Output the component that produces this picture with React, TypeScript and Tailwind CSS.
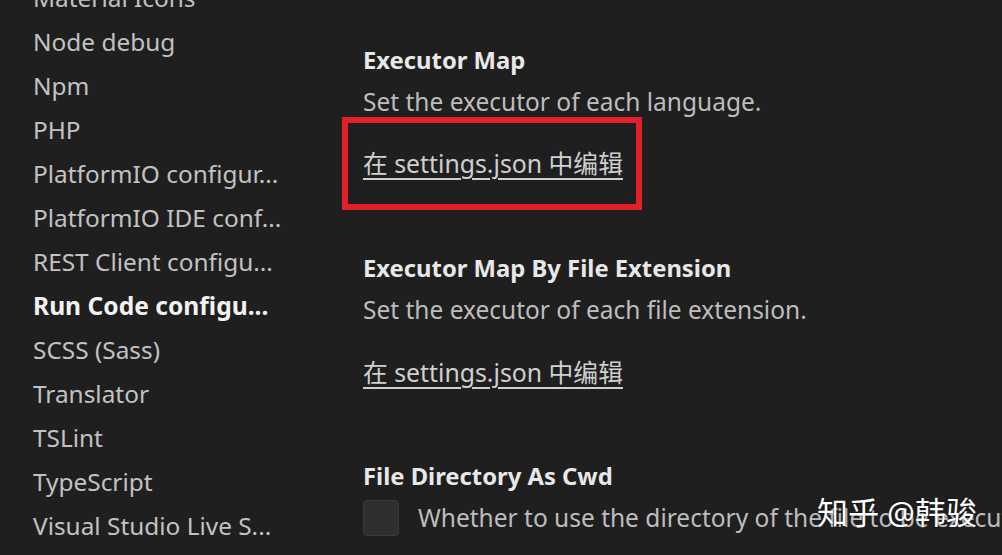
import React from "react";

const items: { label: string; bold?: boolean }[] = [
  { label: "Material Icons" },
  { label: "Node debug" },
  { label: "Npm" },
  { label: "PHP" },
  { label: "PlatformIO configur..." },
  { label: "PlatformIO IDE conf..." },
  { label: "REST Client configu..." },
  { label: "Run Code configu...", bold: true },
  { label: "SCSS (Sass)" },
  { label: "Translator" },
  { label: "TSLint" },
  { label: "TypeScript" },
  { label: "Visual Studio Live S..." },
];

const font = { fontFamily: '"Noto Sans", "Noto Sans CJK SC", sans-serif' };

function EditLink() {
  return (
    <div className="h-[42px] leading-[42px] text-[24.8px] text-[#cfcfcf] underline underline-offset-[5px] decoration-[1.5px] whitespace-nowrap">
      在 settings.json 中编辑
    </div>
  );
}

export default function App() {
  return (
    <div
      className="w-[1002px] h-[555px] bg-[#1f1f1f] overflow-hidden flex relative"
      style={font}
    >
      <div className="w-[330px] shrink-0 pl-[33px] -mt-[24px] flex flex-col">
        {items.map((it) => (
          <div
            key={it.label}
            className={`h-[44px] leading-[44px] whitespace-nowrap ${
              it.bold ? "text-[24.6px] font-bold text-[#f2f2f2]" : "text-[24.4px] text-[#c2c2c2]"
            }`}
          >
            {it.label}
          </div>
        ))}
      </div>
      <div className="flex-1 pl-[33px] pt-[39px] flex flex-col">
        <div className="h-[42px] leading-[42px] text-[23.8px] font-bold text-[#e8e8e8]">
          Executor Map
        </div>
        <div className="h-[42px] leading-[42px] text-[24.5px] text-[#bdbdbd]">
          Set the executor of each language.
        </div>
        <div className="mt-[19px] relative w-fit">
          <EditLink />
          <div className="absolute -left-[21px] -right-[19px] -top-[25px] -bottom-[26px] border-[6px] border-[#e3202a]" />
        </div>
        <div className="mt-[63px] h-[42px] leading-[42px] text-[23.8px] font-bold text-[#e8e8e8]">
          Executor Map By File Extension
        </div>
        <div className="h-[42px] leading-[42px] text-[24.5px] text-[#bdbdbd]">
          Set the executor of each file extension.
        </div>
        <div className="mt-[20px]">
          <EditLink />
        </div>
        <div className="mt-[62px] h-[42px] leading-[42px] text-[23.8px] font-bold text-[#e8e8e8]">
          File Directory As Cwd
        </div>
        <div className="flex items-center gap-[19px] h-[42px] whitespace-nowrap">
          <div className="w-[36px] h-[36px] shrink-0 rounded-[4px] bg-[#2f2f2f] border border-[#3a3a3a]" />
          <div className="text-[24.5px] text-[#bdbdbd] leading-[42px]">
            Whether to use the directory of the file to be executed as the working directory.
          </div>
        </div>
      </div>
      <div
        className="absolute left-[817px] top-[491px] text-[31px] leading-[42px] text-white whitespace-nowrap"
        style={{ textShadow: "0 0 2px rgba(0,0,0,0.6)" }}
      >
        知乎 @韩骏
      </div>
    </div>
  );
}
